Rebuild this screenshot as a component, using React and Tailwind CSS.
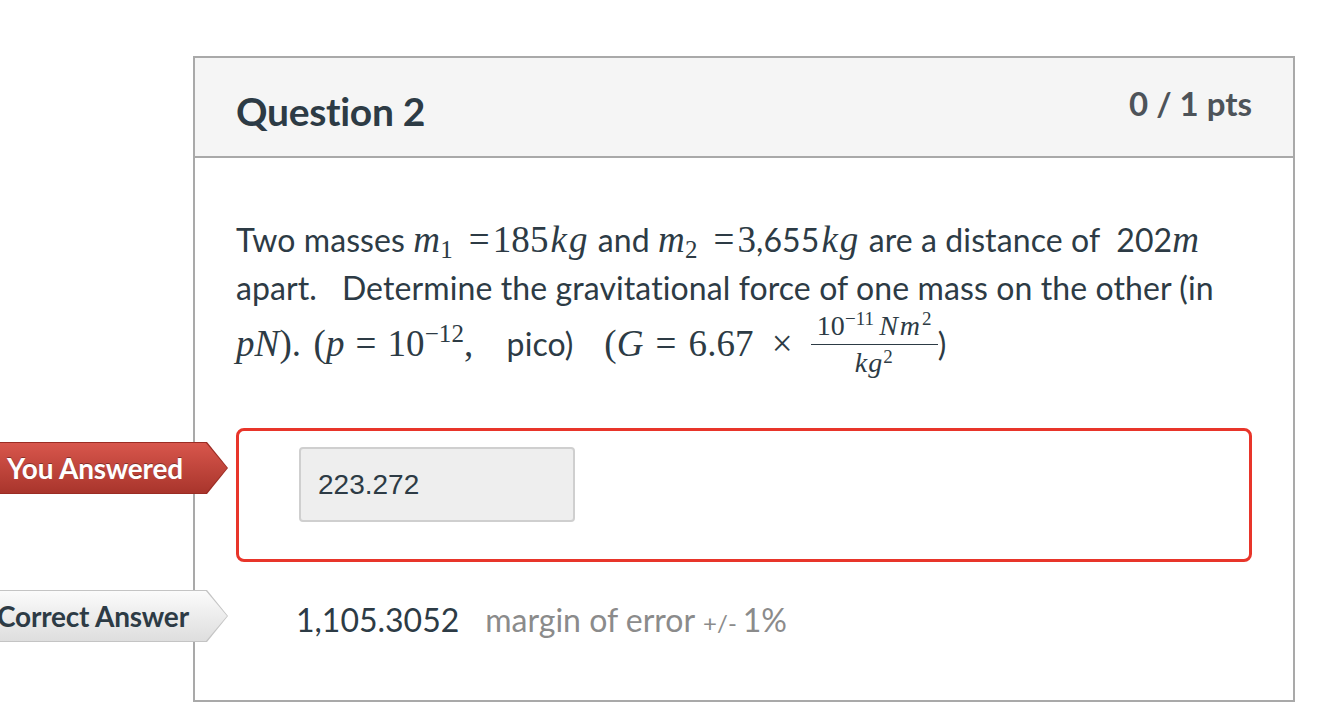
const lato = { fontFamily: 'Lato, "Open Sans", sans-serif' };

function M({ children, i = false, className = '' }) {
  return (
    <span className={`font-['Liberation_Serif',serif] text-[37px] ${i ? 'italic' : ''} ${className}`}>{children}</span>
  );
}

function Frac() {
  return (
    <span className="inline-flex flex-col items-center align-middle ml-[18px] -mt-[6px] font-['Liberation_Serif',serif] leading-none">
      <span className="text-[28px] px-[6px] border-b-[1.5px] border-[#2d3b45] pb-[4px]">
        10<sup className="text-[19px] -top-[10px] mr-[5px]">−11</sup><i className="tracking-[2px]">Nm</i><sup className="text-[19px] -top-[10px]">2</sup>
      </span>
      <span className="text-[28px] pt-[4px] italic tracking-[1px]">
        kg<sup className="text-[19px] not-italic -top-[9px]">2</sup>
      </span>
    </span>
  );
}

function Label({ text, red }) {
  return (
    <div
      className={`absolute left-[-250px] top-[14px] w-[242px] h-[52px] [clip-path:polygon(0_0,calc(100%-21px)_0,100%_50%,calc(100%-21px)_100%,0_100%)] ${
        red ? 'bg-[#9b2c24]' : 'bg-[#c4c4c4]'
      }`}
    >
      <div
        className={`absolute inset-[1px] [clip-path:polygon(0_0,calc(100%-21px)_0,100%_50%,calc(100%-21px)_100%,0_100%)] flex items-center ${
          red
            ? 'bg-linear-to-b from-[#d8564c] to-[#a9352c] text-white pl-[20px] [text-shadow:0_-1px_0_rgba(0,0,0,0.35)]'
            : 'bg-linear-to-b from-[#fbfbfb] to-[#dedede] text-[#2d3b45] pl-[10px]'
        }`}
      >
        <span className="text-[28px] font-bold tracking-[-0.2px] whitespace-nowrap" style={lato}>{text}</span>
      </div>
    </div>
  );
}

const sub = "font-['Liberation_Serif',serif] text-[25px]";

export default function App() {
  return (
    <div className="min-h-[722px] bg-white pt-[56px] pl-[193px]" style={lato}>
      <div className="w-[1102px] h-[646px] border-2 border-[#a9a9a9] text-[#2d3b45]">
        <div className="h-[100px] bg-[#f5f5f5] border-b-2 border-[#a9a9a9] flex justify-between px-[41px]">
          <h2 className="text-[39px] font-bold mt-[24px] tracking-[-0.3px]">Question 2</h2>
          <div className="text-[33px] font-bold text-[#4d5359] mt-[21px]">0 / 1 pts</div>
        </div>

        <div className="px-[41px] pt-[58px]">
          <div className="text-[32px] leading-[48px] tracking-[0.1px] whitespace-nowrap">
            <div>
              Two masses <M i>m</M><sub className={sub}>1</sub>
              <M className="ml-[16px] mr-[3px]">=</M><M>185</M><M i className="tracking-[2px] ml-[2px]">kg</M> and <M i>m</M><sub className={sub}>2</sub>
              <M className="ml-[16px] mr-[3px]">=</M><M>3</M>,655<M i className="tracking-[2px] ml-[2px]">kg</M> are a distance of&nbsp; 202<M i>m</M>
            </div>
            <div>apart.&nbsp;&nbsp; Determine the gravitational force of one mass on the other (in</div>
            <div className="mt-[6px]">
              <M i>pN</M><M>).</M> <M className="ml-[4px]">(</M><M i>p</M><M className="mx-[11px]">=</M><M>10</M>
              <sup className="font-['Liberation_Serif',serif] text-[25px] -top-[14px]">−12</sup><M>,</M>&nbsp;&nbsp;&nbsp; pico)&nbsp;&nbsp;{' '}
              <M className="ml-[6px]">(</M><M i>G</M><M className="mx-[12px]">=</M><M>6.67</M><M className="ml-[18px]">×</M>
              <Frac />
              <span>)</span>
            </div>
          </div>

          <div className="relative mt-[51px]">
            <Label text="You Answered" red />
            <div className="h-[134px] border-[3px] border-[#e8352a] rounded-[8px] pl-[60px] pt-[16px]">
              <div className="w-[276px] h-[75px] bg-[#eeeeee] border-2 border-[#cfcfcf] rounded-[4px] flex items-center pl-[17px]">
                <span className="font-['Liberation_Sans',sans-serif] text-[28px] text-[#2d3b45]">223.272</span>
              </div>
            </div>
          </div>

          <div className="relative mt-[14px] h-[100px]">
            <Label text="Correct Answer" />
            <div className="pl-[60px] pt-[28px] text-[32px] leading-none flex items-baseline">
              <span>1,105.3052</span>
              <span className="text-[#8b8b8b] ml-[26px]">margin of error</span>
              <span className="text-[#8b8b8b] ml-[8px] text-[24px]">+/-</span>
              <span className="text-[#8b8b8b] ml-[6px]">1%</span>
            </div>
          </div>
        </div>
      </div>
    </div>
  );
}
